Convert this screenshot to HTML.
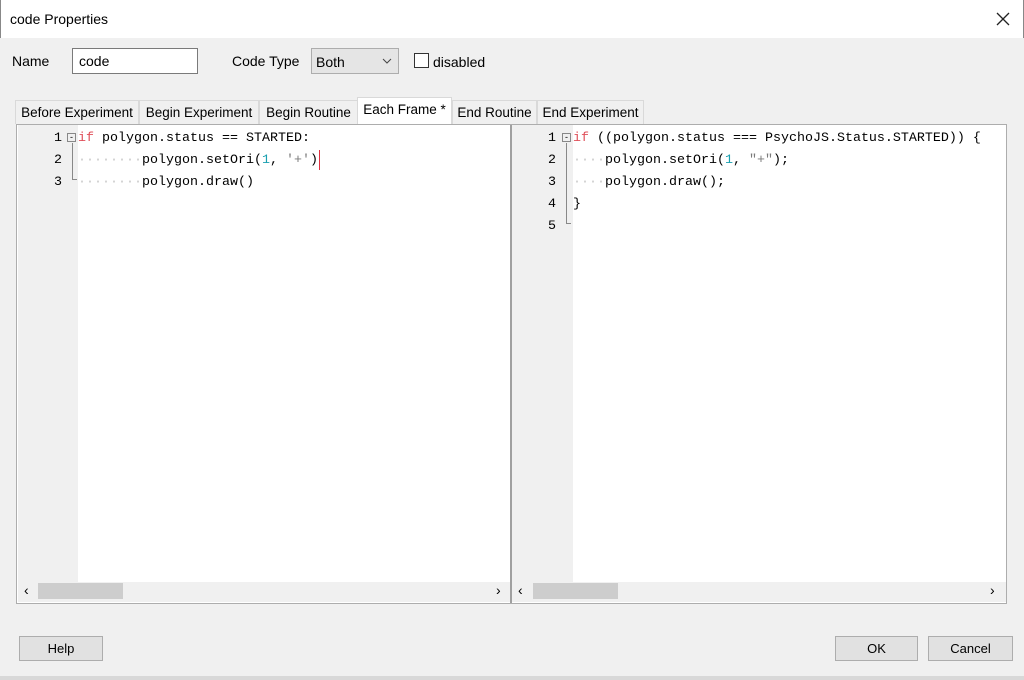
<!DOCTYPE html>
<html><head><style>
*{margin:0;padding:0;box-sizing:border-box}
body{width:1024px;height:680px;background:#f0f0f0;font-family:"Liberation Sans",sans-serif;font-size:13px;color:#000;position:relative;overflow:hidden}
.abs{position:absolute}
.title{left:0;top:0;width:1024px;height:38px;background:#fff;border-left:1px solid #888;border-right:1px solid #888}
.code{font-family:"Liberation Mono",monospace;font-size:13.33px;white-space:pre;line-height:22px}
.btn{background:#e1e1e1;border:1px solid #adadad;text-align:center;line-height:23px;font-size:13px}
.tab{top:100px;height:24px;border:1px solid #d9d9d9;border-bottom:none;background:#f0f0f0;line-height:23px;text-align:center;font-size:13.5px}
.k{color:#e0505a}.n{color:#1aa0b0}.s{color:#7a7a7a}.g{color:#c8c8c8}
</style></head><body>
<div class="abs title"></div>
<div class="abs" style="left:10px;top:11px;font-size:14px">code Properties</div>
<svg class="abs" style="left:996px;top:12px" width="14" height="14"><path d="M1 1L13 13M13 1L1 13" stroke="#222" stroke-width="1.3"/></svg>
<div class="abs" style="left:12px;top:53px;font-size:14px">Name</div>
<div class="abs" style="left:72px;top:48px;width:126px;height:26px;background:#fff;border:1px solid #7a7a7a;padding:4px 6px;font-size:14px">code</div>
<div class="abs" style="left:232px;top:53px;font-size:14px">Code Type</div>
<div class="abs" style="left:311px;top:48px;width:88px;height:26px;background:#e5e5e5;border:1px solid #adadad;padding:5px 4px;font-size:14px">Both<svg style="position:absolute;left:70px;top:9px" width="10" height="6"><path d="M1 1L5 5L9 1" stroke="#444" fill="none"/></svg></div>
<div class="abs" style="left:414px;top:53px;width:15px;height:15px;border:1px solid #333;background:#fff"></div>
<div class="abs" style="left:433px;top:54px;font-size:14px">disabled</div>

<div class="abs tab" style="left:15px;width:124px">Before Experiment</div>
<div class="abs tab" style="left:139px;width:120px">Begin Experiment</div>
<div class="abs tab" style="left:259px;width:99px">Begin Routine</div>
<div class="abs tab" style="left:357px;width:95px;top:97px;height:28px;background:#fff;line-height:24px">Each Frame *</div>
<div class="abs tab" style="left:452px;width:85px">End Routine</div>
<div class="abs tab" style="left:537px;width:107px">End Experiment</div>

<div class="abs" style="left:16px;top:124px;width:991px;height:480px;border:1px solid #adadad;background:#fff"></div>
<div class="abs" style="left:18px;top:125px;width:60px;height:457px;background:#f0f0f0"></div>
<div class="abs" style="left:18px;top:582px;width:492px;height:20px;background:#f0f0f0"></div>
<div class="abs" style="left:38px;top:583px;width:85px;height:16px;background:#cdcdcd"></div>
<div class="abs" style="left:24px;top:582px;font-size:14px">‹</div>
<div class="abs" style="left:496px;top:582px;font-size:14px">›</div>
<div class="abs" style="left:510px;top:125px;width:2px;height:478px;background:#a0a0a0"></div>
<div class="abs code" style="left:40px;top:128px;text-align:right;width:22px">1
2
3</div>
<div class="abs" style="left:67px;top:133px;width:9px;height:9px;border:1px solid #888;font-size:9px;line-height:7px;text-align:center">-</div>
<div class="abs" style="left:72px;top:143px;width:1px;height:36px;background:#888"></div>
<div class="abs" style="left:72px;top:179px;width:5px;height:1px;background:#888"></div>
<div class="abs code" style="left:78px;top:128px"><span class="k">if</span> polygon.status == STARTED:
<span class="g">········</span>polygon.setOri(<span class="n">1</span>, <span class="s">'+'</span>)
<span class="g">········</span>polygon.draw()</div>
<div class="abs" style="left:319px;top:150px;width:1px;height:20px;background:#e03040"></div>
<div class="abs" style="left:512px;top:125px;width:61px;height:457px;background:#f0f0f0"></div>
<div class="abs" style="left:512px;top:582px;width:494px;height:20px;background:#f0f0f0"></div>
<div class="abs" style="left:533px;top:583px;width:85px;height:16px;background:#cdcdcd"></div>
<div class="abs" style="left:518px;top:582px;font-size:14px">‹</div>
<div class="abs" style="left:990px;top:582px;font-size:14px">›</div>
<div class="abs code" style="left:534px;top:128px;text-align:right;width:22px">1
2
3
4
5</div>
<div class="abs" style="left:562px;top:133px;width:9px;height:9px;border:1px solid #888;font-size:9px;line-height:7px;text-align:center">-</div>
<div class="abs" style="left:566px;top:143px;width:1px;height:80px;background:#888"></div>
<div class="abs" style="left:566px;top:223px;width:5px;height:1px;background:#888"></div>
<div class="abs code" style="left:573px;top:128px"><span class="k">if</span> ((polygon.status === PsychoJS.Status.STARTED)) {
<span class="g">····</span>polygon.setOri(<span class="n">1</span>, <span class="s">"+"</span>);
<span class="g">····</span>polygon.draw();
}</div>

<div class="abs btn" style="left:19px;top:636px;width:84px;height:25px">Help</div>
<div class="abs btn" style="left:835px;top:636px;width:83px;height:25px">OK</div>
<div class="abs btn" style="left:928px;top:636px;width:85px;height:25px">Cancel</div>
<div class="abs" style="left:0;top:676px;width:1024px;height:4px;background:#d8d8d8"></div>
</body></html>
